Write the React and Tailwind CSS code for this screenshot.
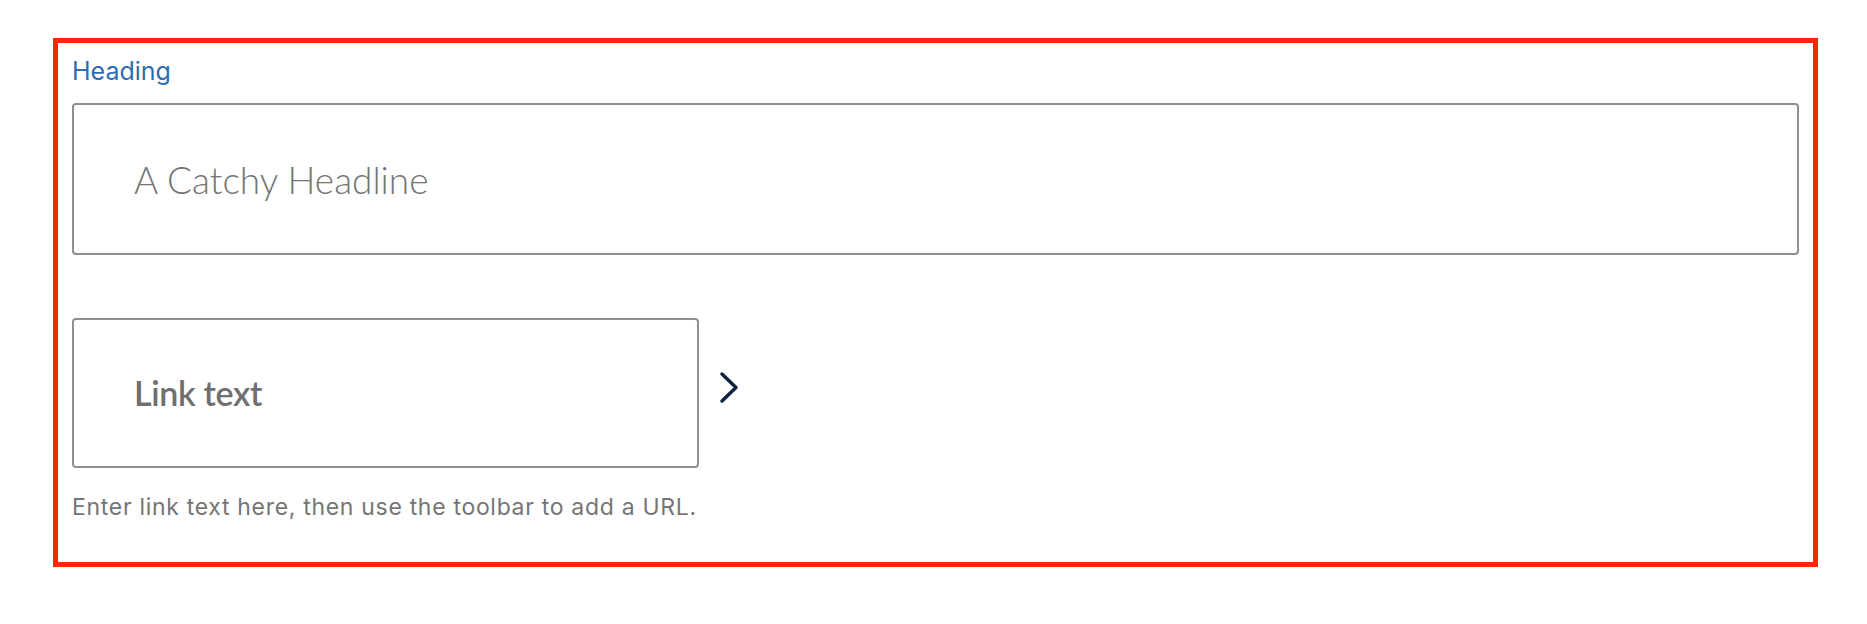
import React from 'react';

const ChevronRight = () => (
    <svg width="20" height="33" viewBox="0 0 20 33" fill="none" className="shrink-0">
        <polyline points="3,3 17,16.5 3,30" stroke="#0f2340" strokeWidth="3.5" strokeLinecap="round" strokeLinejoin="round" />
    </svg>
);

const App = () => {
    return (
        <div className="min-h-screen bg-white pt-[38px] pl-[53px]">
            <div className="w-[1765px] h-[529px] border-[5px] border-[#ff2600] px-[14px] pt-[12px]">
                {/* block label */}
                <div className="text-[25px] leading-[32px] text-[#2f6cb2] font-['Inter',sans-serif]">
                    Heading
                </div>

                <div className="mt-[16px] h-[152px] border-2 border-[#8f8f8f] rounded-[4px] flex items-center pl-[60px]">
                    <span className="text-[37px] leading-none text-[#747474] font-['Lato',sans-serif] font-light">
                        A Catchy Headline
                    </span>
                </div>

                <div className="mt-[63px] flex items-center gap-[20px]">
                    <div className="w-[627px] h-[150px] border-2 border-[#8f8f8f] rounded-[4px] flex items-center pl-[60px]">
                        <span className="text-[34px] leading-none tracking-[-0.01em] text-[#6f6f6f] font-['Lato',sans-serif] font-semibold">
                            Link text
                        </span>
                    </div>
                    <div className="-mt-[12px]">
                        <ChevronRight />
                    </div>
                </div>

                <p className="mt-[24px] text-[23px] leading-[30px] tracking-[0.03em] text-[#757575] font-['Inter',sans-serif]">
                    Enter link text here, then use the toolbar to add a URL.
                </p>
            </div>
        </div>
    );
};

export default App;
